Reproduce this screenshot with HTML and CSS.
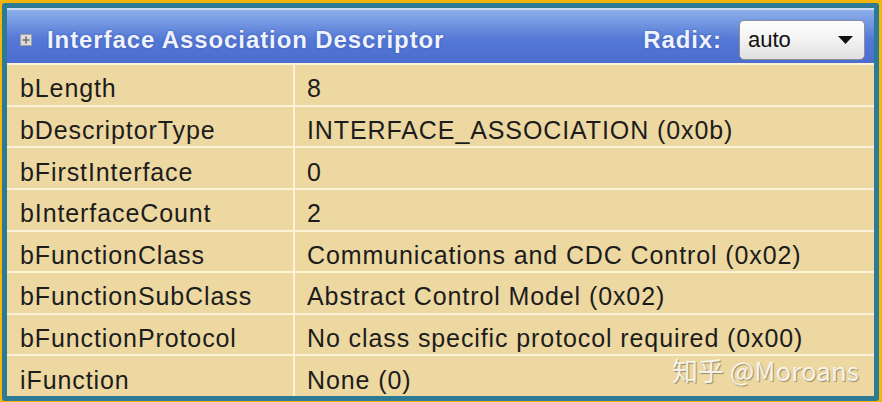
FILE: index.html
```html
<!DOCTYPE html>
<html>
<head>
<meta charset="utf-8">
<link rel="stylesheet" href="styles.css">
</head>
<body>
<div class="frame">
  <div class="header">
    <span class="expander"><svg width="12" height="12" viewBox="0 0 12 12"><rect x="0.5" y="0.5" width="11" height="11" fill="#dcdcdc" stroke="#a0a0a0"/><path d="M6 2.5v7M2.5 6h7" stroke="#707070" stroke-width="1.6"/></svg></span>
    <span class="title">Interface Association Descriptor</span>
    <span class="radix">Radix:</span>
    <div class="select"><span>auto</span><svg class="arrow" width="15" height="8" viewBox="0 0 15 8"><path d="M0 0h15L7.5 8z" fill="#111"/></svg></div>
  </div>
  <div class="table">
    <div class="row"><div class="key">bLength</div><div class="val">8</div></div>
    <div class="row"><div class="key">bDescriptorType</div><div class="val">INTERFACE_ASSOCIATION (0x0b)</div></div>
    <div class="row"><div class="key">bFirstInterface</div><div class="val">0</div></div>
    <div class="row"><div class="key">bInterfaceCount</div><div class="val">2</div></div>
    <div class="row"><div class="key">bFunctionClass</div><div class="val">Communications and CDC Control (0x02)</div></div>
    <div class="row"><div class="key">bFunctionSubClass</div><div class="val">Abstract Control Model (0x02)</div></div>
    <div class="row"><div class="key">bFunctionProtocol</div><div class="val">No class specific protocol required (0x00)</div></div>
    <div class="row last"><div class="key">iFunction</div><div class="val">None (0)<span class="watermark">知乎 @Moroans</span></div></div>
  </div>
</div>
</body>
</html>
```
FILE: styles.css
```css
html, body {
  margin: 0;
  padding: 0;
}
body {
  background: #f3b50a;
  width: 882px;
  height: 402px;
  overflow: hidden;
  font-family: "Liberation Sans", Arial, sans-serif;
}
.frame {
  margin: 3px 3px 1px 2px;
  height: 388px;
  border: 5px solid #2c7a94;
  border-radius: 3px;
  display: flex;
  flex-direction: column;
  background: #ecd8a0;
}
.header {
  height: 55px;
  box-sizing: border-box;
  padding: 6px 9px 0 13px;
  border-top: 2px solid #c9dbf6;
  background: linear-gradient(#8cb0ea, #5478d6 55%, #4a6dcf);
  display: flex;
  align-items: center;
}
.expander {
  display: flex;
  width: 12px;
  height: 12px;
  margin-right: 15px;
}
.title {
  flex: 1;
  color: #eef3ff;
  font-weight: bold;
  font-size: 24px;
  letter-spacing: 0.9px;
  text-shadow: 0 0 2px rgba(40,60,140,0.7);
}
.radix {
  color: #eef3ff;
  font-weight: bold;
  font-size: 24px;
  letter-spacing: 0.9px;
  margin-right: 17px;
  text-shadow: 0 0 2px rgba(40,60,140,0.7);
}
.select {
  width: 126px;
  height: 40px;
  box-sizing: border-box;
  border: 1px solid #8a8f9a;
  border-radius: 5px;
  background: linear-gradient(#ffffff, #f2f2f2 50%, #e0e0e0);
  display: flex;
  align-items: center;
  padding: 0 11px 0 8px;
  font-size: 22px;
  color: #111;
}
.select span {
  flex: 1;
}
.table {
  flex: 1;
  display: flex;
  flex-direction: column;
}
.row {
  flex: 1;
  display: flex;
  border-top: 2px solid #fbf2d8;
  font-size: 25px;
  letter-spacing: 0.9px;
  color: #1c1c1c;
}
.key {
  width: 273px;
  padding-left: 13px;
  padding-top: 8px;
  border-right: 2px solid #fbf2d8;
  display: flex;
  align-items: center;
}
.val {
  flex: 1;
  padding-left: 12px;
  padding-top: 8px;
  display: flex;
  align-items: center;
  position: relative;
}
.watermark {
  position: absolute;
  right: 15px;
  top: 1px;
  line-height: 26px;
  height: 26px;
  font-family: "Noto Sans CJK SC", "Liberation Sans", sans-serif;
  font-size: 26px;
  letter-spacing: 0;
  color: rgba(255,255,255,0.85);
  text-shadow: 1px 1px 1px rgba(0,0,0,0.35);
}
```
